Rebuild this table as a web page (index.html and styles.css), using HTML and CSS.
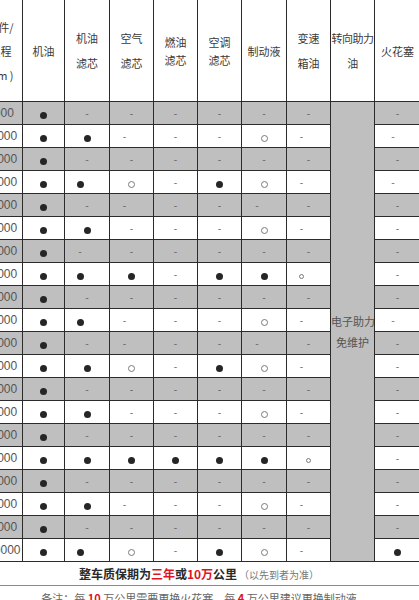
FILE: index.html
```html
<!DOCTYPE html>
<html lang="zh">
<head>
<meta charset="utf-8">
<title>保养周期表</title>
<link rel="stylesheet" href="styles.css">
</head>
<body>
<div class="viewport">
  <div class="sheet">
    <table class="plan">
      <colgroup>
        <col class="c-km"><col class="c-a"><col class="c-b"><col class="c-c"><col class="c-d"><col class="c-e"><col class="c-f"><col class="c-g"><col class="c-h"><col class="c-i">
      </colgroup>
      <thead>
        <tr class="head">
          <th><p class="l24">配件/<br>里程<br>(km )</p></th>
          <th>机油</th>
          <th><p class="l25">机油<br>滤芯</p></th>
          <th><p class="l25">空气<br>滤芯</p></th>
          <th class="soft"><p class="l18">燃油<br>滤芯</p></th>
          <th><p class="l18">空调<br>滤芯</p></th>
          <th>制动液</th>
          <th><p class="l25">变速<br>箱油</p></th>
          <th><p class="l25 tight">转向助力<br>油</p></th>
          <th>火花塞</th>
        </tr>
      </thead>
      <tbody>
        <tr class="g"><td class="km">5000</td><td><i class="dot"></i></td><td class="x">-</td><td class="x">-</td><td class="x soft">-</td><td class="x">-</td><td class="x">-</td><td class="x">-</td>
          <td class="merged" rowspan="20"><p>电子助力<br>免维护</p></td><td class="x">-</td></tr>
        <tr class="w"><td class="km">10000</td><td><i class="dot"></i></td><td><i class="dot"></i></td><td class="x sh">-</td><td class="x soft">-</td><td class="x">-</td><td><i class="ring"></i></td><td class="x sh">-</td><td class="x sh2">-</td></tr>
        <tr class="g"><td class="km">15000</td><td><i class="dot"></i></td><td class="x">-</td><td class="x">-</td><td class="x soft">-</td><td class="x">-</td><td class="x">-</td><td class="x">-</td><td class="x">-</td></tr>
        <tr class="w"><td class="km">20000</td><td><i class="dot"></i></td><td class="sh"><i class="dot"></i></td><td><i class="ring"></i></td><td class="x soft">-</td><td><i class="dot"></i></td><td><i class="ring"></i></td><td class="x sh">-</td><td class="x sh2">-</td></tr>
        <tr class="g"><td class="km">25000</td><td><i class="dot"></i></td><td class="x">-</td><td class="x sh">-</td><td class="x soft">-</td><td class="x">-</td><td class="x sh">-</td><td class="x">-</td><td class="x">-</td></tr>
        <tr class="w"><td class="km">30000</td><td><i class="dot"></i></td><td><i class="dot"></i></td><td class="x">-</td><td class="x soft">-</td><td class="x">-</td><td><i class="ring"></i></td><td class="x sh">-</td><td class="x">-</td></tr>
        <tr class="g"><td class="km">35000</td><td><i class="dot"></i></td><td class="x sh">-</td><td class="x">-</td><td class="x soft">-</td><td class="x">-</td><td class="x">-</td><td class="x">-</td><td class="x">-</td></tr>
        <tr class="w"><td class="km">40000</td><td><i class="dot"></i></td><td class="sh"><i class="dot"></i></td><td><i class="dot"></i></td><td class="x soft">-</td><td><i class="dot"></i></td><td><i class="dot"></i></td><td class="sh"><i class="ring small"></i></td><td class="x">-</td></tr>
        <tr class="g"><td class="km">45000</td><td><i class="dot"></i></td><td class="x">-</td><td class="x">-</td><td class="x soft">-</td><td class="x">-</td><td class="x">-</td><td class="x">-</td><td class="x">-</td></tr>
        <tr class="w"><td class="km">50000</td><td><i class="dot"></i></td><td class="sh"><i class="dot"></i></td><td class="x sh">-</td><td class="x soft">-</td><td class="x">-</td><td><i class="ring"></i></td><td class="x sh">-</td><td class="x sh2">-</td></tr>
        <tr class="g"><td class="km">55000</td><td><i class="dot"></i></td><td class="x">-</td><td class="x sh">-</td><td class="x soft">-</td><td class="x">-</td><td class="x sh">-</td><td class="x">-</td><td class="x">-</td></tr>
        <tr class="w"><td class="km">60000</td><td><i class="dot"></i></td><td><i class="dot"></i></td><td><i class="ring"></i></td><td class="x soft">-</td><td><i class="dot"></i></td><td><i class="ring"></i></td><td class="x sh">-</td><td class="x">-</td></tr>
        <tr class="g"><td class="km">65000</td><td><i class="dot"></i></td><td class="x">-</td><td class="x">-</td><td class="x soft">-</td><td class="x">-</td><td class="x">-</td><td class="x">-</td><td class="x">-</td></tr>
        <tr class="w"><td class="km">70000</td><td><i class="dot"></i></td><td><i class="dot"></i></td><td class="x">-</td><td class="x soft">-</td><td class="x">-</td><td><i class="ring"></i></td><td class="x sh">-</td><td class="x">-</td></tr>
        <tr class="g"><td class="km">75000</td><td><i class="dot"></i></td><td class="x">-</td><td class="x">-</td><td class="x soft">-</td><td class="x">-</td><td class="x">-</td><td class="x">-</td><td class="x">-</td></tr>
        <tr class="w"><td class="km">80000</td><td><i class="dot"></i></td><td><i class="dot"></i></td><td><i class="dot"></i></td><td class="soft"><i class="dot"></i></td><td><i class="dot"></i></td><td><i class="dot"></i></td><td><i class="ring small"></i></td><td class="x">-</td></tr>
        <tr class="g"><td class="km">85000</td><td><i class="dot"></i></td><td class="x">-</td><td class="x">-</td><td class="x soft">-</td><td class="x">-</td><td class="x">-</td><td class="x">-</td><td class="x">-</td></tr>
        <tr class="w"><td class="km">90000</td><td><i class="dot"></i></td><td><i class="dot"></i></td><td class="x sh">-</td><td class="x soft">-</td><td class="x">-</td><td><i class="ring"></i></td><td class="x sh">-</td><td class="x">-</td></tr>
        <tr class="g"><td class="km">95000</td><td><i class="dot"></i></td><td class="x">-</td><td class="x">-</td><td class="x soft">-</td><td class="x">-</td><td class="x">-</td><td class="x">-</td><td class="x">-</td></tr>
        <tr class="w"><td class="km">100000</td><td><i class="dot"></i></td><td class="sh"><i class="dot"></i></td><td><i class="ring"></i></td><td class="x soft">-</td><td><i class="dot"></i></td><td><i class="ring"></i></td><td class="x sh">-</td><td><i class="dot"></i></td></tr>
      </tbody>
    </table>
    <p class="warranty">整车质保期为<em>三年</em>或<em>10万</em>公里<span class="aside">（以先到者为准）</span></p>
    <p class="note">备注：每 <b>10</b> 万公里需要更换火花塞，每 <b>4</b> 万公里建议更换制动液</p>
  </div>
</div>
</body>
</html>
```

FILE: styles.css
```css
* {
  box-sizing: border-box;
}

html,
body {
  margin: 0;
  padding: 0;
  background: #fff;
}

body {
  font-family: "Noto Sans CJK SC", "Liberation Sans", sans-serif;
  color: #333;
}

.viewport {
  width: 419px;
  height: 600px;
  overflow: hidden;
}

.sheet {
  width: 442px;
  margin-left: -22px;
  margin-top: -1px;
}

.plan {
  width: 442px;
  border-collapse: collapse;
  table-layout: fixed;
  font-size: 11px;
}

.c-km { width: 44px; }
.c-a { width: 42px; }
.c-b { width: 45px; }
.c-c { width: 44px; }
.c-d { width: 44px; }
.c-e { width: 44px; }
.c-f { width: 45px; }
.c-g { width: 44px; }
.c-h { width: 44px; }
.c-i { width: 46px; }

.plan th,
.plan td {
  border: 1px solid #2b2b2b;
  padding: 0;
  text-align: center;
  vertical-align: middle;
  white-space: nowrap;
}

.plan th {
  height: 102px;
  font-weight: normal;
  color: #3a3a3a;
  background: #fff;
}

.plan th p {
  margin: 0;
}

.l24 { line-height: 24px; }
.l25 { line-height: 25px; }
.l18 { line-height: 18px; }

.tight {
  letter-spacing: -0.5px;
}

.plan td {
  height: 23px;
  line-height: 12px;
}

.plan .soft {
  border-left-color: #6f6f6f;
}

tr.g td {
  background: #bfbfbf;
}

tr.w td {
  background: #fff;
}

.plan td.km {
  color: #555;
  font-family: "Liberation Sans", sans-serif;
  font-size: 12px;
}

.plan td.x {
  color: #5a5a5a;
  font-size: 10px;
}

.plan td.sh {
  padding-right: 14px;
}

.plan td.sh2 {
  padding-right: 9px;
}

.dot {
  display: inline-block;
  width: 7px;
  height: 7px;
  border-radius: 50%;
  background: #262626;
  vertical-align: middle;
}

.ring {
  display: inline-block;
  width: 7px;
  height: 7px;
  border-radius: 50%;
  border: 1px solid #7a7a7a;
  background: transparent;
  vertical-align: middle;
}

.ring.small {
  width: 5px;
  height: 5px;
}

.plan td.merged {
  background: #bfbfbf;
  color: #555;
  font-size: 11px;
}

.merged p {
  margin: 0;
  line-height: 21px;
}

.warranty {
  margin: 0;
  height: 23px;
  line-height: 23px;
  text-align: center;
  font-size: 12px;
  font-weight: bold;
  color: #2a2a2a;
}

.warranty em {
  font-style: normal;
  color: #e0141e;
}

.aside {
  font-weight: normal;
  font-size: 10px;
  color: #777;
  margin-left: 2px;
}

.note {
  margin: 0;
  border-top: 1px solid #8c8c8c;
  padding-top: 5px;
  text-align: center;
  font-size: 11px;
  line-height: 14px;
  color: #666;
}

.note b {
  color: #e0141e;
}
```
